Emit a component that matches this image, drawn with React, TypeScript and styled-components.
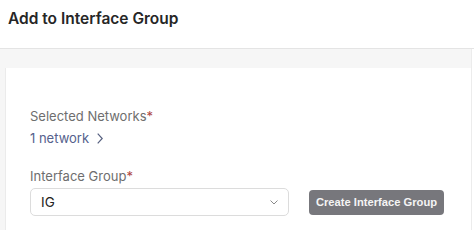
import styled, { createGlobalStyle } from 'styled-components'

const GlobalStyle = createGlobalStyle`
  body {
    margin: 0;
    background: #ffffff;
    font-family: Inter, 'Noto Sans', 'Liberation Sans', sans-serif;
    overflow: hidden;
  }
`

const Header = styled.div`
  height: 49px;
  box-sizing: border-box;
  padding: 9px 0 0 8px;
  border-bottom: 1px solid #e4e4e4;
`

const Title = styled.h1`
  margin: 0;
  font-size: 15.5px;
  line-height: 20px;
  font-weight: 600;
  color: #262626;
`

const Body = styled.div`
  width: 472px;
  background: #f6f6f6;
  padding: 19px 0 0 5px;
  box-sizing: border-box;
  border-right: 1px solid #ececec;
`

const Card = styled.div`
  background: #ffffff;
  border-left: 1px solid #ebebeb;
  padding: 40px 0 14px 24px;
`

const Field = styled.div<{ $gap?: number }>`
  display: flex;
  flex-direction: column;
  align-items: flex-start;
  margin-bottom: ${(p) => p.$gap ?? 0}px;
`

const Label = styled.label`
  font-size: 13px;
  line-height: 16px;
  color: #6e6e6e;

  span {
    color: #b0463f;
  }
`

const NetworkLink = styled.a`
  display: inline-flex;
  align-items: center;
  gap: 8px;
  margin-top: 6px;
  font-size: 13px;
  line-height: 16px;
  color: #55618c;
  cursor: pointer;
`

const Row = styled.div`
  display: flex;
  align-items: center;
  gap: 20px;
  margin-top: 4px;
`

const Select = styled.div`
  width: 259px;
  height: 28px;
  box-sizing: border-box;
  border: 1px solid #dcdcdc;
  border-radius: 5px;
  display: flex;
  align-items: center;
  justify-content: space-between;
  padding: 0 10px 0 10px;
  font-size: 13.5px;
  color: #222;
`

const Button = styled.button`
  height: 25px;
  width: 135px;
  border: none;
  border-radius: 4px;
  background: #77777c;
  color: #f4f4f4;
  font-family: 'Liberation Sans', Arial, sans-serif;
  font-weight: 700;
  font-size: 11.2px;
  padding: 0;
  cursor: not-allowed;
`

const Chevron = ({ dir }: { dir: 'right' | 'down' }) =>
  dir === 'right' ? (
    <svg width="6" height="11" viewBox="0 0 6 11" fill="none">
      <path d="M0.7 0.7 L5.2 5.5 L0.7 10.3" stroke="#56607f" strokeWidth="1.2" />
    </svg>
  ) : (
    <svg width="8" height="5" viewBox="0 0 8 5" fill="none">
      <path d="M0.5 0.5 L4 4 L7.5 0.5" stroke="#8a8a8a" strokeWidth="1" />
    </svg>
  )

const App = () => {
  return (
    <>
      <GlobalStyle />
      <Header>
        <Title>Add to Interface Group</Title>
      </Header>
      <Body>
        <Card>
          <Field $gap={22}>
            <Label>
              Selected Networks<span>*</span>
            </Label>
            <NetworkLink>
              1 network <Chevron dir="right" />
            </NetworkLink>
          </Field>
          <Field>
            <Label>
              Interface Group<span>*</span>
            </Label>
            <Row>
              <Select>
                IG
                <Chevron dir="down" />
              </Select>
              <Button>Create Interface Group</Button>
            </Row>
          </Field>
        </Card>
      </Body>
    </>
  )
}

export default App
